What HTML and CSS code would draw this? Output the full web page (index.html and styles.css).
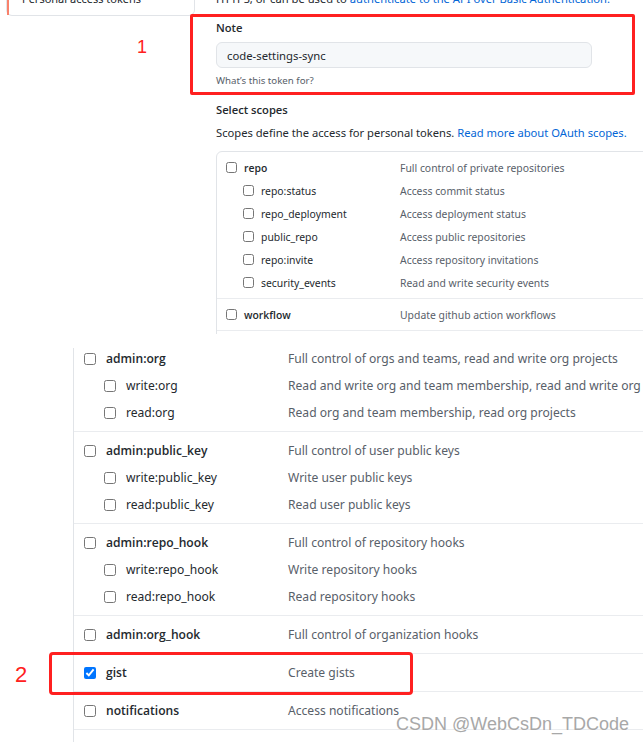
FILE: index.html
```html
<!DOCTYPE html>
<html lang="en">
<head>
<meta charset="utf-8">
<title>New personal access token</title>
<link rel="stylesheet" href="styles.css">
</head>
<body>
<section class="shot-top">
  <div class="top-inner">
    <nav class="sidebar">
      <a class="nav-item" href="#">Personal access tokens</a>
    </nav>
    <div class="main">
      <p class="intro">HTTPS, or can be used to <a href="#">authenticate to the API over Basic Authentication.</a></p>
      <div class="note-label">Note</div>
      <input class="note-input" type="text" value="code-settings-sync">
      <div class="hint">What’s this token for?</div>
      <div class="scopes-title">Select scopes</div>
      <p class="scopes-note">Scopes define the access for personal tokens. <a href="#">Read more about OAuth scopes.</a></p>
      <div class="scope-table top">
        <div class="group">
          <label class="row"><span class="lbl"><input type="checkbox"><b>repo</b></span><span class="desc">Full control of private repositories</span></label>
          <label class="row sub"><span class="lbl"><input type="checkbox">repo:status</span><span class="desc">Access commit status</span></label>
          <label class="row sub"><span class="lbl"><input type="checkbox">repo_deployment</span><span class="desc">Access deployment status</span></label>
          <label class="row sub"><span class="lbl"><input type="checkbox">public_repo</span><span class="desc">Access public repositories</span></label>
          <label class="row sub"><span class="lbl"><input type="checkbox">repo:invite</span><span class="desc">Access repository invitations</span></label>
          <label class="row sub"><span class="lbl"><input type="checkbox">security_events</span><span class="desc">Read and write security events</span></label>
        </div>
        <div class="group">
          <label class="row"><span class="lbl"><input type="checkbox"><b>workflow</b></span><span class="desc">Update github action workflows</span></label>
        </div>
        <div class="group group-cut"></div>
      </div>
    </div>
  </div>
</section>

<section class="shot-bottom">
  <div class="scope-table bottom">
    <div class="group">
      <label class="row"><span class="lbl"><input type="checkbox"><b>admin:org</b></span><span class="desc">Full control of orgs and teams, read and write org projects</span></label>
      <label class="row sub"><span class="lbl"><input type="checkbox">write:org</span><span class="desc">Read and write org and team membership, read and write org projects</span></label>
      <label class="row sub"><span class="lbl"><input type="checkbox">read:org</span><span class="desc">Read org and team membership, read org projects</span></label>
    </div>
    <div class="group">
      <label class="row"><span class="lbl"><input type="checkbox"><b>admin:public_key</b></span><span class="desc">Full control of user public keys</span></label>
      <label class="row sub"><span class="lbl"><input type="checkbox">write:public_key</span><span class="desc">Write user public keys</span></label>
      <label class="row sub"><span class="lbl"><input type="checkbox">read:public_key</span><span class="desc">Read user public keys</span></label>
    </div>
    <div class="group">
      <label class="row"><span class="lbl"><input type="checkbox"><b>admin:repo_hook</b></span><span class="desc">Full control of repository hooks</span></label>
      <label class="row sub"><span class="lbl"><input type="checkbox">write:repo_hook</span><span class="desc">Write repository hooks</span></label>
      <label class="row sub"><span class="lbl"><input type="checkbox">read:repo_hook</span><span class="desc">Read repository hooks</span></label>
    </div>
    <div class="group">
      <label class="row"><span class="lbl"><input type="checkbox"><b>admin:org_hook</b></span><span class="desc">Full control of organization hooks</span></label>
    </div>
    <div class="group">
      <label class="row"><span class="lbl"><input type="checkbox" checked><b>gist</b></span><span class="desc">Create gists</span></label>
    </div>
    <div class="group">
      <label class="row"><span class="lbl"><input type="checkbox"><b>notifications</b></span><span class="desc">Access notifications</span></label>
    </div>
    <div class="group">
      <label class="row"><span class="lbl"><input type="checkbox"></span></label>
    </div>
  </div>
</section>

<div class="anno-box anno-box1"></div>
<span class="anno-num anno-num1">1</span>
<div class="anno-box anno-box2"></div>
<span class="anno-num anno-num2">2</span>
<span class="watermark">CSDN @WebCsDn_TDCode</span>
</body>
</html>
```
FILE: styles.css
```css
html, body {
  margin: 0;
  padding: 0;
}

body {
  width: 643px;
  height: 742px;
  overflow: hidden;
  position: relative;
  background: #ffffff;
  font-family: "Noto Sans", "Open Sans", sans-serif;
  color: #24292e;
}

a {
  color: #0366d6;
  text-decoration: none;
}

/* ---------- top screenshot ---------- */
.shot-top {
  height: 334px;
  overflow: hidden;
}

.top-inner {
  display: flex;
  align-items: flex-start;
  margin-top: -9px;
}

.sidebar {
  flex: none;
  width: 189px;
  margin-left: 6px;
  box-sizing: border-box;
  border: 1px solid #e1e4e8;
  border-top: 0;
  border-radius: 0 0 6px 6px;
}

.nav-item {
  display: block;
  padding: 0 0 8px 13px;
  border-left: 2px solid #f9826c;
  font-size: 11px;
  line-height: 16px;
  color: #24292e;
  white-space: nowrap;
}

.main {
  flex: 1;
  min-width: 0;
  margin-left: 21px;
}

.intro {
  margin: 0;
  font-size: 11.2px;
  line-height: 16px;
  color: #24292e;
  white-space: nowrap;
}

.note-label {
  margin-top: 13px;
  font-family: "Open Sans", "Noto Sans", sans-serif;
  font-size: 11.2px;
  font-weight: 600;
  line-height: 16px;
}

.note-input {
  display: block;
  margin: 6px 0 0;
  width: 376px;
  height: 26px;
  box-sizing: border-box;
  padding: 0 10px;
  border: 1px solid #e1e4e8;
  border-radius: 6px;
  background: #f6f8fa;
  font-family: "Noto Sans", "Open Sans", sans-serif;
  font-size: 11.3px;
  color: #24292e;
  outline: none;
}

.hint {
  margin-top: 6px;
  font-size: 9.7px;
  line-height: 14px;
  color: #586069;
}

.scopes-title {
  margin-top: 14px;
  font-family: "Open Sans", "Noto Sans", sans-serif;
  font-size: 11.2px;
  font-weight: 600;
  line-height: 16px;
}

.scopes-note {
  margin: 7px 0 0;
  font-size: 11.2px;
  line-height: 16px;
  white-space: nowrap;
}

/* ---------- scope tables ---------- */
.scope-table .group {
  border-top: 1px solid #eaecef;
}

.scope-table .row {
  display: flex;
  align-items: center;
  white-space: nowrap;
}

.scope-table .lbl {
  flex: none;
  display: flex;
  align-items: center;
  box-sizing: border-box;
}

.scope-table b {
  font-family: "Open Sans", "Noto Sans", sans-serif;
  font-weight: 600;
}

.scope-table input[type="checkbox"] {
  flex: none;
  margin: 0;
}

.scope-table .desc {
  color: #586069;
}

.scope-table.top {
  margin-top: 10px;
  width: 470px;
  border: 1px solid #e1e4e8;
  border-radius: 6px 0 0 0;
}

.scope-table.top .group {
  padding: 4px 0;
}

.scope-table.top .group:first-child {
  border-top: 0;
}

.scope-table.top .group-cut {
  height: 20px;
  padding: 0;
}

.scope-table.top .row {
  height: 23px;
  font-size: 10.4px;
}

.scope-table.top .lbl {
  width: 183px;
  padding-left: 9px;
}

.scope-table.top .sub .lbl {
  padding-left: 26px;
}

.scope-table.top input[type="checkbox"] {
  width: 11px;
  height: 11px;
  margin-right: 7px;
}

/* ---------- bottom screenshot ---------- */
.shot-bottom {
  margin-top: 14px;
  height: 394px;
  overflow: hidden;
}

.scope-table.bottom {
  margin: -9px 0 0 73px;
  width: 640px;
  border-left: 1px solid #e1e4e8;
}

.scope-table.bottom .group {
  padding: 5px 0;
}

.scope-table.bottom .row {
  height: 27px;
  font-size: 12.1px;
}

.scope-table.bottom .lbl {
  width: 214px;
  padding-left: 10px;
}

.scope-table.bottom .sub .lbl {
  padding-left: 30px;
}

.scope-table.bottom input[type="checkbox"] {
  width: 12px;
  height: 12px;
  margin-right: 10px;
}

/* ---------- annotations (overlay) ---------- */
.anno-box {
  position: absolute;
  box-sizing: border-box;
  border: 3px solid #ff2020;
}

.anno-box1 {
  left: 190px;
  top: 14px;
  width: 445px;
  height: 81px;
  border-radius: 2px;
}

.anno-box2 {
  left: 49px;
  top: 652px;
  width: 364px;
  height: 43px;
  border-radius: 4px;
}

.anno-num {
  position: absolute;
  font-family: "Liberation Sans", Arial, sans-serif;
  line-height: 1;
  color: #ff2020;
}

.anno-num1 {
  left: 137px;
  top: 38px;
  font-size: 18px;
}

.anno-num2 {
  left: 15px;
  top: 664px;
  font-size: 22px;
}

.watermark {
  position: absolute;
  left: 396px;
  top: 715px;
  font-family: "Liberation Sans", Arial, sans-serif;
  font-size: 18px;
  line-height: 1;
  color: #a8a8a8;
  white-space: nowrap;
  text-shadow: 0 0 1px #ffffff;
}
```
